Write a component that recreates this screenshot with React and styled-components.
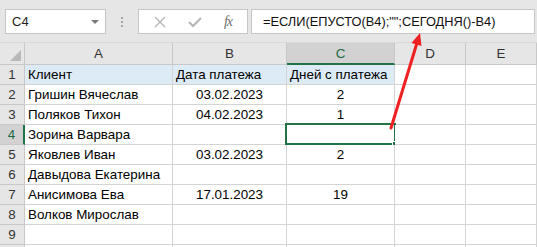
import React from 'react';
import styled, { createGlobalStyle } from 'styled-components';

const GlobalStyle = createGlobalStyle`
    body {
        margin: 0;
        background: #ffffff;
        font-family: "Liberation Sans", Arial, sans-serif;
    }
`;

const Window = styled.div`
    position: relative;
    width: 537px;
    height: 247px;
    overflow: hidden;
    background: #ffffff;
    color: #000000;
`;

const TopBar = styled.div`
    display: flex;
    align-items: flex-start;
    height: 43px;
    padding: 9px 2px 0 5px;
    box-sizing: border-box;
    background: #e6e6e6;
    border-bottom: 1px solid #d9d9d9;
`;

const NameBox = styled.div`
    display: flex;
    align-items: center;
    justify-content: space-between;
    width: 101px;
    height: 25px;
    box-sizing: border-box;
    padding: 0 6px;
    background: #ffffff;
    border: 1px solid #c6c6c6;
    font-size: 13px;
    color: #222;
`;

const Caret = styled.span`
    width: 0;
    height: 0;
    border-left: 4px solid transparent;
    border-right: 4px solid transparent;
    border-top: 4px solid #7a7a7a;
`;

const Dots = styled.div`
    display: flex;
    flex-direction: column;
    align-items: center;
    justify-content: center;
    gap: 2px;
    width: 32px;
    height: 25px;
    & > span {
        width: 2px;
        height: 2px;
        background: #a6a6a6;
    }
`;

const FxBox = styled.div`
    display: flex;
    align-items: center;
    justify-content: space-around;
    width: 110px;
    height: 25px;
    box-sizing: border-box;
    padding: 0 4px;
    background: #ffffff;
    border: 1px solid #c6c6c6;
`;

const Fx = styled.span`
    font-family: "Liberation Serif", "Times New Roman", serif;
    font-style: italic;
    font-size: 14px;
    color: #6e6e6e;
    letter-spacing: -1px;
`;

const FormulaBox = styled.div`
    flex: 1;
    display: flex;
    align-items: center;
    height: 25px;
    margin-left: 3px;
    box-sizing: border-box;
    padding-left: 11px;
    background: #ffffff;
    border: 1px solid #c6c6c6;
    font-size: 12.8px;
    color: #111;
    white-space: nowrap;
`;

const Sheet = styled.div`
    display: grid;
    grid-template-columns: 25px 148px 114px 108px 71px 1fr;
    grid-template-rows: 22px repeat(10, 20px);
`;

const Corner = styled.div`
    position: relative;
    background: #e6e6e6;
    border-right: 1px solid #c8c8c8;
    border-bottom: 1px solid #c8c8c8;
    &::after {
        content: '';
        position: absolute;
        right: 3px;
        bottom: 3px;
        width: 0;
        height: 0;
        border-left: 11px solid transparent;
        border-bottom: 11px solid #b9b9b9;
    }
`;

const ColHead = styled.div`
    display: flex;
    align-items: center;
    justify-content: center;
    box-sizing: border-box;
    font-size: 13.4px;
    background: ${p => (p.$active ? '#d2d2d2' : '#e6e6e6')};
    color: ${p => (p.$active ? '#1e6b41' : '#333')};
    border-right: 1px solid #c8c8c8;
    border-bottom: ${p => (p.$active ? '2px solid #217346' : '1px solid #c8c8c8')};
`;

const RowHead = styled.div`
    display: flex;
    align-items: center;
    justify-content: center;
    box-sizing: border-box;
    font-size: 13.4px;
    background: ${p => (p.$active ? '#d2d2d2' : '#e6e6e6')};
    color: ${p => (p.$active ? '#1e6b41' : '#333')};
    border-bottom: 1px solid #c8c8c8;
    border-right: ${p => (p.$active ? '2px solid #217346' : '1px solid #c8c8c8')};
`;

const Cell = styled.div`
    position: relative;
    display: flex;
    align-items: center;
    justify-content: ${p => p.$align || 'flex-start'};
    box-sizing: border-box;
    padding: 0 3px;
    font-size: 13.4px;
    white-space: nowrap;
    background: ${p => (p.$title ? '#ddebf7' : '#ffffff')};
    border-right: 1px solid #d4d4d4;
    border-bottom: 1px solid #d4d4d4;
`;

const Selection = styled.div`
    position: absolute;
    top: -2px;
    left: -2px;
    right: -2px;
    bottom: -1px;
    border: 2px solid #217346;
    pointer-events: none;
    &::after {
        content: '';
        position: absolute;
        right: -4px;
        bottom: -4px;
        width: 5px;
        height: 5px;
        background: #217346;
        border: 1px solid #ffffff;
        border-right: none;
        border-bottom: none;
    }
`;

const Arrow = styled.svg`
    position: absolute;
    top: 0;
    left: 0;
    pointer-events: none;
`;

const columns = ['A', 'B', 'C', 'D', 'E'];

const rows = [
    ['Клиент', 'Дата платежа', 'Дней с платежа'],
    ['Гришин Вячеслав', '03.02.2023', '2'],
    ['Поляков Тихон', '04.02.2023', '1'],
    ['Зорина Варвара', '', ''],
    ['Яковлев Иван', '03.02.2023', '2'],
    ['Давыдова Екатерина', '', ''],
    ['Анисимова Ева', '17.01.2023', '19'],
    ['Волков Мирослав', '', ''],
    ['', '', ''],
    ['', '', ''],
];

const App = () => {
    return (
        <Window>
            <GlobalStyle />
            <TopBar>
                <NameBox>
                    C4
                    <Caret />
                </NameBox>
                <Dots>
                    <span />
                    <span />
                    <span />
                </Dots>
                <FxBox>
                    <svg width="12" height="12" viewBox="0 0 12 12">
                        <path d="M1 1 L11 11 M11 1 L1 11" stroke="#b4b4b4" strokeWidth="1.3" />
                    </svg>
                    <svg width="14" height="12" viewBox="0 0 14 12">
                        <path d="M1 6 L5 10 L13 2" stroke="#b4b4b4" strokeWidth="2" fill="none" />
                    </svg>
                    <Fx>fx</Fx>
                </FxBox>
                <FormulaBox>=ЕСЛИ(ЕПУСТО(B4);"";СЕГОДНЯ()-B4)</FormulaBox>
            </TopBar>
            <Sheet>
                <Corner />
                {columns.map(c => (
                    <ColHead key={c} $active={c === 'C'}>{c}</ColHead>
                ))}
                {rows.map((r, i) => {
                    const n = i + 1;
                    const title = n === 1;
                    return (
                        <React.Fragment key={n}>
                            <RowHead $active={n === 4}>{n < 10 ? n : ''}</RowHead>
                            <Cell $title={title}>{r[0]}</Cell>
                            <Cell $title={title} $align={title ? 'flex-start' : 'center'}>{r[1]}</Cell>
                            <Cell $title={title} $align={title ? 'flex-start' : 'center'}>
                                {r[2]}
                                {n === 4 && <Selection />}
                            </Cell>
                            <Cell />
                            <Cell />
                        </React.Fragment>
                    );
                })}
            </Sheet>
            <Arrow width="537" height="247">
                <line x1="391" y1="128" x2="416.5" y2="44.5" stroke="#f02020" strokeWidth="3" strokeLinecap="round" />
                <polygon points="420,33 421.5,46 411.5,43" fill="#f02020" />
            </Arrow>
        </Window>
    );
};

export default App;
